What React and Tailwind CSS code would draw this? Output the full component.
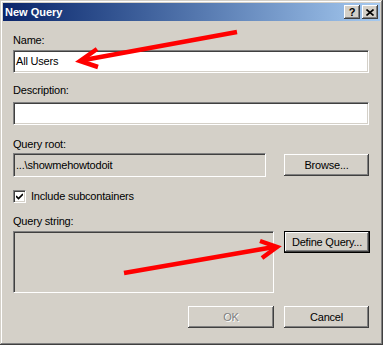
import React from "react";

const sunken =
  "border border-t-[#808080] border-l-[#808080] border-r-white border-b-white shadow-[inset_1px_1px_0_#404040,inset_-1px_-1px_0_#d4d0c8]";
const raised =
  "shadow-[inset_-1px_-1px_0_#404040,inset_1px_1px_0_#fff,inset_-2px_-2px_0_#808080,inset_2px_2px_0_#d4d0c8]";

function Button({ children, className = "", disabled = false }) {
  return (
    <button
      type="button"
      className={`flex items-center justify-center bg-[#d4d0c8] text-[11px] leading-[13px] ${raised} ${
        disabled ? "text-[#808080] [text-shadow:1px_1px_0_#fff]" : "text-black"
      } ${className}`}
    >
      {children}
    </button>
  );
}

function TitleButton({ children }) {
  return (
    <div
      className={`w-[16px] h-[14px] bg-[#d4d0c8] flex items-center justify-center text-[11px] font-bold leading-none text-black ${raised}`}
    >
      {children}
    </div>
  );
}

export default function App() {
  return (
    <div className="relative w-[383px] h-[345px] overflow-hidden bg-[#d4d0c8] font-['Liberation_Sans',Arial,sans-serif] tracking-[-0.2px] text-black shadow-[inset_-1px_-1px_0_#404040,inset_1px_1px_0_#d4d0c8,inset_-2px_-2px_0_#808080,inset_2px_2px_0_#fff]">
      {/* Title bar */}
      <div className="mx-[3px] mt-[3px] h-[18px] flex items-center justify-between bg-gradient-to-r from-[#0a246a] to-[#a6caf0] pl-[2px] pr-[2px]">
        <span className="text-[11px] font-bold text-white tracking-normal">New Query</span>
        <div className="flex items-center gap-[2px]">
          <TitleButton>?</TitleButton>
          <TitleButton>
            <svg width="8" height="7" viewBox="0 0 8 7">
              <path d="M0.5 0.5 L7.5 6.5 M7.5 0.5 L0.5 6.5" stroke="#000" strokeWidth="1.6" />
            </svg>
          </TitleButton>
        </div>
      </div>

      {/* Body */}
      <div className="pl-[13px] text-[11px] leading-[13px]">
        <div className="mt-[13px]">Name:</div>
        <div className={`mt-[3px] w-[356px] h-[23px] bg-white flex items-center pl-[2px] ${sunken}`}>
          All Users
        </div>

        <div className="mt-[11px]">Description:</div>
        <div className={`mt-[5px] w-[356px] h-[23px] bg-white ${sunken}`} />

        <div className="mt-[13px]">Query root:</div>
        <div className="mt-[2px] flex items-center">
          <div className={`w-[253px] h-[24px] bg-[#d4d0c8] flex items-center pl-[2px] ${sunken}`}>
            ...\showmehowtodoit
          </div>
          <Button className="ml-[18px] w-[85px] h-[22px]">Browse...</Button>
        </div>

        <div className="mt-[13px] flex items-center">
          <div className={`w-[13px] h-[13px] bg-white flex items-center justify-center ${sunken}`}>
            <svg width="7" height="7" viewBox="0 0 7 7">
              <path d="M0 3 L2.5 5.5 L7 1" fill="none" stroke="#000" strokeWidth="1.6" />
            </svg>
          </div>
          <span className="ml-[5px]">Include subcontainers</span>
        </div>

        <div className="mt-[12px]">Query string:</div>
        <div className="mt-[3px] flex items-start">
          <div className={`w-[261px] h-[62px] bg-[#d4d0c8] ${sunken}`} />
          <div className="ml-[10px] border border-black">
            <Button className="w-[84px] h-[20px]">Define Query...</Button>
          </div>
        </div>

        <div className="mt-[13px] flex items-center">
          <Button disabled className="ml-[175px] w-[86px] h-[22px]">
            OK
          </Button>
          <Button className="ml-[10px] w-[85px] h-[22px]">Cancel</Button>
        </div>
      </div>

      {/* Red annotation arrows */}
      <svg
        className="absolute left-0 top-0 pointer-events-none"
        width="383"
        height="345"
        viewBox="0 0 383 345"
      >
        <g stroke="#ff0000" strokeWidth="4.5" fill="none" strokeLinecap="butt" strokeLinejoin="miter">
          <path d="M237 32 L84 60" />
          <path d="M97 49 L80 61 L98 67" />
          <path d="M124 273 L274 247" />
          <path d="M260 241 L277 247 L262 258" />
        </g>
      </svg>
    </div>
  );
}
